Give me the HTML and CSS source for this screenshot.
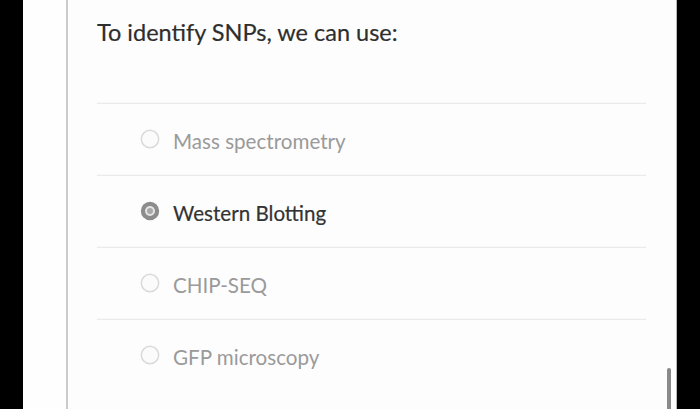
FILE: index.html
```html
<!DOCTYPE html>
<html>
<head>
<meta charset="utf-8">
<link rel="stylesheet" href="styles.css">
</head>
<body>
<div class="frame">
  <div class="edge"></div>
  <div class="gutter"></div>
  <main class="panel">
    <h1 class="question">To identify SNPs, we can use:</h1>
    <ul class="options">
      <li class="option">
        <svg class="radio" width="20" height="20" viewBox="0 0 20 20"><circle cx="10" cy="10" r="8.7" fill="#fbfbfb" stroke="#dadada" stroke-width="1.5"/></svg>
        <span class="label">Mass spectrometry</span>
      </li>
      <li class="option selected">
        <svg class="radio" width="20" height="20" viewBox="0 0 20 20"><circle cx="10" cy="10" r="9.2" fill="#8c8c8c"/><circle cx="10" cy="10" r="5" fill="#e4e4e4"/><circle cx="10" cy="10" r="3" fill="#a8a8a8"/></svg>
        <span class="label">Western Blotting</span>
      </li>
      <li class="option">
        <svg class="radio" width="20" height="20" viewBox="0 0 20 20"><circle cx="10" cy="10" r="8.7" fill="#fbfbfb" stroke="#dadada" stroke-width="1.5"/></svg>
        <span class="label">CHIP-SEQ</span>
      </li>
      <li class="option">
        <svg class="radio" width="20" height="20" viewBox="0 0 20 20"><circle cx="10" cy="10" r="8.7" fill="#fbfbfb" stroke="#dadada" stroke-width="1.5"/></svg>
        <span class="label">GFP microscopy</span>
      </li>
    </ul>
    <div class="scrollbar"></div>
  </main>
  <div class="edge"></div>
</div>
</body>
</html>
```

FILE: styles.css
```css
html, body {
  margin: 0;
  padding: 0;
  height: 100%;
  background: #000;
  overflow: hidden;
}
.frame {
  display: flex;
  height: 409px;
  width: 700px;
  font-family: Lato, "Liberation Sans", sans-serif;
}
.edge {
  width: 23px;
  background: #000;
  flex: none;
}
.gutter {
  width: 43px;
  background: #fefefe;
  flex: none;
}
.panel {
  position: relative;
  flex: 1;
  background: #fdfdfd;
  border-left: 2px solid #cbcbcb;
  border-right: 1px solid #b5b5b5;
  padding: 18px 30px 0 29px;
}
.question {
  margin: 0 0 57px 0;
  font-size: 23.5px;
  line-height: 28px;
  font-weight: 400;
  color: #2e2e2e;
  -webkit-text-stroke: 0.2px #2e2e2e;
}
.options {
  list-style: none;
  margin: 0;
  padding: 0;
}
.option {
  display: flex;
  align-items: center;
  height: 71px;
  border-top: 1px solid #ebebeb;
  padding-left: 43px;
  box-shadow: 0 -1px 1px rgba(0,0,0,0.02);
}
.radio {
  flex: none;
  margin-right: 13px;
  margin-top: -1px;
}
.label {
  font-size: 20.6px;
  color: #9a9a9a;
  padding-top: 2px;
}
.selected .label {
  color: #333;
  -webkit-text-stroke: 0.2px #333;
}
.scrollbar {
  position: absolute;
  right: 5px;
  top: 368px;
  width: 4px;
  height: 50px;
  border-radius: 2px;
  background: #8a8a8a;
}
```
